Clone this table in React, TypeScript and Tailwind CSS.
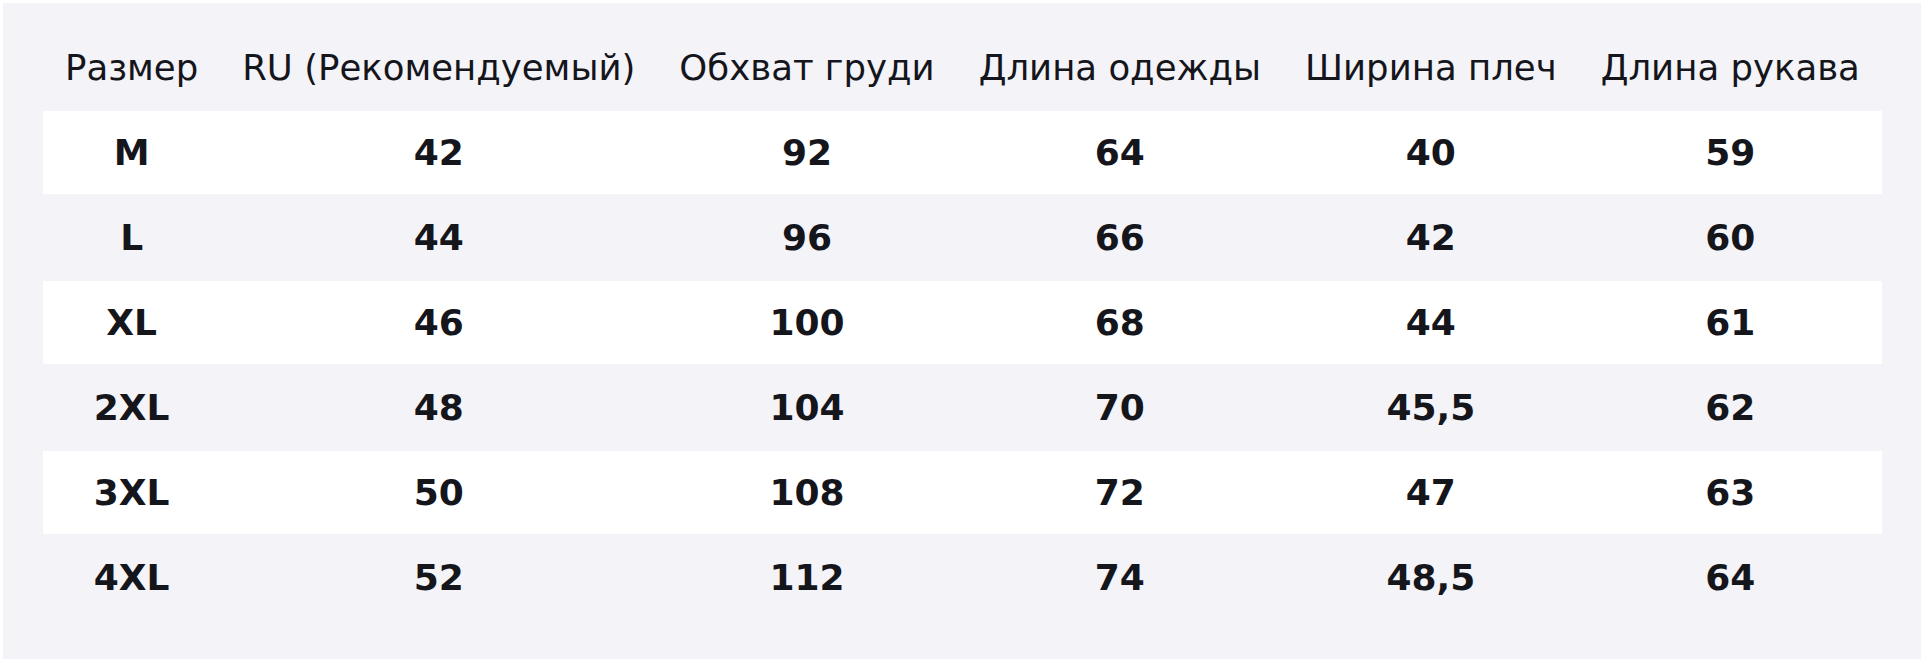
const headers = [
  "Размер",
  "RU (Рекомендуемый)",
  "Обхват груди",
  "Длина одежды",
  "Ширина плеч",
  "Длина рукава",
];

const rows = [
  ["M", "42", "92", "64", "40", "59"],
  ["L", "44", "96", "66", "42", "60"],
  ["XL", "46", "100", "68", "44", "61"],
  ["2XL", "48", "104", "70", "45,5", "62"],
  ["3XL", "50", "108", "72", "47", "63"],
  ["4XL", "52", "112", "74", "48,5", "64"],
];

const SizeTable = () => {
  return (
    <table className="w-full border-separate border-spacing-0">
      <thead>
        <tr className="h-[85px]">
          {headers.map((h) => (
            <th
              key={h}
              className="whitespace-nowrap px-[22px] text-center align-middle text-[35.5px] font-normal"
            >
              {h}
            </th>
          ))}
        </tr>
      </thead>
      <tbody>
        {rows.map((row, i) => (
          <tr key={row[0]} className="h-[85px]">
            {row.map((cell, j) => (
              <td
                key={j}
                className={
                  i % 2 === 0
                    ? "border-y border-[#f3f3f8] bg-white px-[22px] text-center align-middle text-[36px] font-bold"
                    : "px-[22px] text-center align-middle text-[36px] font-bold"
                }
              >
                {cell}
              </td>
            ))}
          </tr>
        ))}
      </tbody>
    </table>
  );
};

export default function App() {
  return (
    <div className="h-[663px] w-[1924px] bg-white p-[3px]">
      <div
        className="h-[656px] w-[1918px] bg-[#f3f3f8] px-[40px] pt-[22px] pb-[39px] text-[#15151c]"
        style={{ fontFamily: '"DejaVu Sans", sans-serif' }}
      >
        <SizeTable />
      </div>
    </div>
  );
}
